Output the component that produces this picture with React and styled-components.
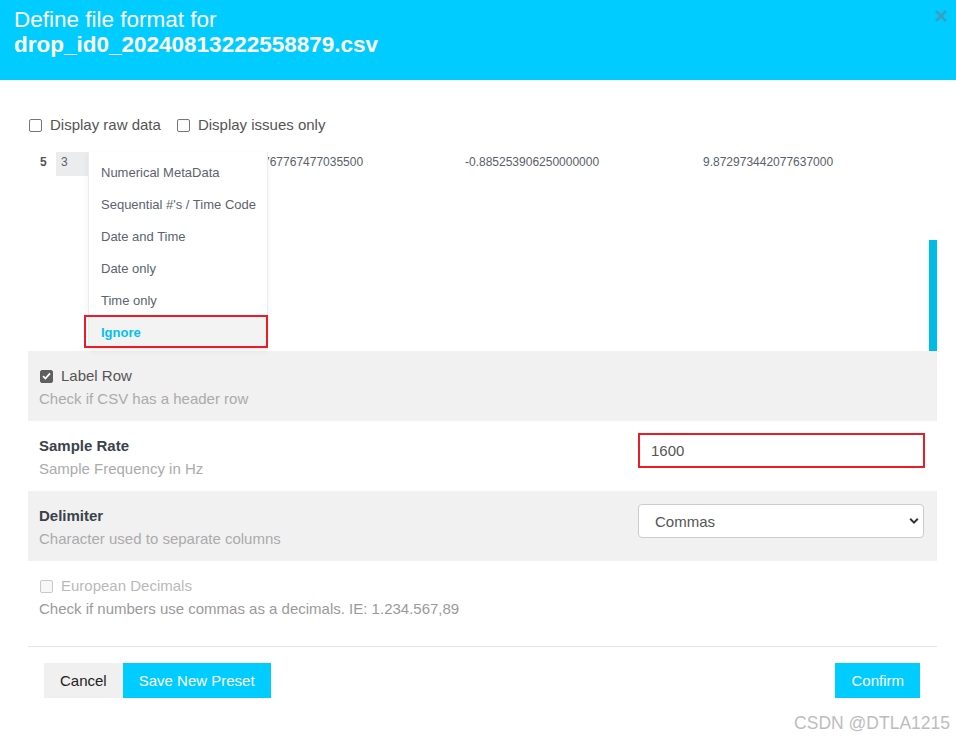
import React from "react";
import styled, { createGlobalStyle, css } from "styled-components";

const Global = createGlobalStyle`
  html, body { margin: 0; padding: 0; background: #fff; }
  body { font-family: "Liberation Sans", Arial, sans-serif; }
  * { box-sizing: border-box; }
`;

const Modal = styled.div`
  width: 956px;
  min-height: 742px;
  background: #fff;
`;

const Header = styled.header`
  height: 80px;
  background: #00ccff;
  padding: 7px 8px 0 14px;
  display: flex;
  justify-content: space-between;
  align-items: flex-start;
`;

const Title = styled.h1`
  margin: 0;
  font-size: 22.5px;
  font-weight: normal;
  line-height: 25px;
  color: #fff;
`;

const FileName = styled.span`
  display: block;
  font-weight: bold;
`;

const CloseButton = styled.button`
  border: none;
  background: transparent;
  padding: 0;
  margin-top: 2px;
  width: 14px;
  height: 14px;
  display: flex;
  cursor: pointer;
`;

const Body = styled.div`
  padding: 0 19px 0 28px;
`;

const OptionsBar = styled.div`
  display: flex;
  align-items: center;
  height: 18px;
  margin-top: 36px;
`;

const CheckLabel = styled.label`
  display: flex;
  align-items: center;
  gap: 8px;
  font-size: 15px;
  line-height: 20px;
  color: ${(p) => (p.$disabled ? "#b9b9b9" : "#555")};
  margin-right: 15px;
`;

const Box = styled.span`
  width: 13px;
  height: 13px;
  margin-left: 1px;
  border-radius: 2px;
  flex: none;
  display: flex;
  align-items: center;
  justify-content: center;
  border: 1px solid #767676;
  background: #fff;
  ${(p) =>
    p.$checked &&
    css`
      background: #5f5f5f;
      border-color: #5f5f5f;
    `}
  ${(p) =>
    p.$disabled &&
    css`
      border-color: #c8c8c8;
      background: #f7f7f7;
    `}
`;

const TableArea = styled.div`
  position: relative;
  height: 205px;
  margin-top: 12px;
  padding-top: 6px;
`;

const DataRow = styled.div`
  display: grid;
  grid-template-columns: 28px 32px 141px 236px 238px 1fr;
  height: 24px;
  font-size: 12px;
  line-height: 14px;
  color: #5a6069;
`;

const IndexCell = styled.div`
  padding: 3px 0 0 12px;
  font-weight: bold;
  color: #555;
`;

const TypeCell = styled.div`
  background: #ebeced;
  padding: 3px 0 0 5px;
`;

const ValueCell = styled.div`
  padding-top: 3px;
  white-space: nowrap;
`;

const Menu = styled.ul`
  position: absolute;
  left: 60px;
  top: 6px;
  width: 180px;
  margin: 0;
  padding: 4px 0 0;
  list-style: none;
  background: #fff;
  border: 1px solid #ededed;
  border-top: none;
  box-shadow: 0 2px 6px rgba(0, 0, 0, 0.06);
`;

const MenuItem = styled.li`
  position: relative;
  height: 32px;
  display: flex;
  align-items: center;
  padding-left: 12px;
  font-size: 13px;
  color: #5b6370;
  white-space: nowrap;
  ${(p) =>
    p.$active &&
    css`
      background: #f3f3f3;
      color: #00c2f2;
      font-weight: bold;
      &::after {
        content: "";
        position: absolute;
        left: -5px;
        right: -1px;
        top: -1px;
        bottom: 0;
        border: 2px solid #ea1c26;
      }
    `}
`;

const ScrollThumb = styled.div`
  position: absolute;
  right: 0;
  top: 94px;
  width: 8px;
  height: 111px;
  background: #00bbe6;
`;

const Section = styled.div`
  display: flex;
  justify-content: space-between;
  align-items: flex-start;
  padding: 15px 11px 11px;
  background: ${(p) => (p.$shaded ? "#f1f1f1" : "#fff")};
`;

const SectionText = styled.div`
  display: flex;
  flex-direction: column;
`;

const SectionTitle = styled.div`
  font-size: 15px;
  line-height: 20px;
  font-weight: bold;
  color: #3b424c;
`;

const SectionHint = styled.div`
  margin-top: 2px;
  font-size: 15px;
  line-height: 22px;
  color: ${(p) => (p.$dark ? "#9a9a9a" : "#ababab")};
`;

const RateInput = styled.input`
  width: 287px;
  height: 35px;
  margin: -3px 1px 0 0;
  padding: 0 11px;
  border: 2px solid #ea1c26;
  outline: none;
  font-family: inherit;
  font-size: 15px;
  color: #555;
  background: #fff;
`;

const SelectWrap = styled.div`
  position: relative;
  width: 286px;
  height: 34px;
  margin: -2px 2px 0 0;
`;

const Select = styled.select`
  appearance: none;
  width: 100%;
  height: 100%;
  padding: 0 16px;
  border: 1px solid #cccccc;
  border-radius: 4px;
  background: #fff;
  font-family: inherit;
  font-size: 15px;
  color: #555;
`;

const Chevron = styled.svg`
  position: absolute;
  right: 5px;
  top: 13px;
  pointer-events: none;
`;

const Footer = styled.div`
  margin-top: 15px;
  border-top: 1px solid #e5e5e5;
  padding: 16px 17px 0 16px;
  display: flex;
  justify-content: space-between;
`;

const ButtonGroup = styled.div`
  display: flex;
`;

const Button = styled.button`
  height: 35px;
  padding: 0 16px;
  border: none;
  font-family: inherit;
  font-size: 15px;
  cursor: pointer;
  background: ${(p) => (p.$primary ? "#00ccff" : "#f0f0f0")};
  color: ${(p) => (p.$primary ? "#fff" : "#222")};
`;

const Watermark = styled.div`
  margin-top: 14px;
  padding-right: 6px;
  text-align: right;
  font-size: 17.5px;
  line-height: 22px;
  color: #bdbdbd;
`;

const Check = () => (
  <svg width="9" height="8" viewBox="0 0 9 8">
    <path d="M1 4.2 L3.4 6.5 L8 1.3" fill="none" stroke="#fff" strokeWidth="1.8" />
  </svg>
);

const menuItems = [
  "Numerical MetaData",
  "Sequential #'s / Time Code",
  "Date and Time",
  "Date only",
  "Time only",
  "Ignore",
];

export default function App() {
  return (
    <Modal>
      <Global />
      <Header>
        <Title>
          Define file format for
          <FileName>drop_id0_20240813222558879.csv</FileName>
        </Title>
        <CloseButton aria-label="Close">
          <svg width="14" height="14" viewBox="0 0 14 14">
            <path d="M2 2 L12 12 M12 2 L2 12" stroke="#3a9fc2" strokeWidth="2.6" />
          </svg>
        </CloseButton>
      </Header>
      <Body>
        <OptionsBar>
          <CheckLabel>
            <Box />
            Display raw data
          </CheckLabel>
          <CheckLabel>
            <Box />
            Display issues only
          </CheckLabel>
        </OptionsBar>
        <TableArea>
          <DataRow>
            <IndexCell>5</IndexCell>
            <TypeCell>3</TypeCell>
            <div />
            <ValueCell>-0.216767767477035500</ValueCell>
            <ValueCell>-0.885253906250000000</ValueCell>
            <ValueCell>9.872973442077637000</ValueCell>
          </DataRow>
          <Menu>
            {menuItems.map((m) => (
              <MenuItem key={m} $active={m === "Ignore"}>
                {m}
              </MenuItem>
            ))}
          </Menu>
          <ScrollThumb />
        </TableArea>
        <Section $shaded>
          <SectionText>
            <CheckLabel>
              <Box $checked>
                <Check />
              </Box>
              Label Row
            </CheckLabel>
            <SectionHint>Check if CSV has a header row</SectionHint>
          </SectionText>
        </Section>
        <Section>
          <SectionText>
            <SectionTitle>Sample Rate</SectionTitle>
            <SectionHint>Sample Frequency in Hz</SectionHint>
          </SectionText>
          <RateInput defaultValue="1600" />
        </Section>
        <Section $shaded>
          <SectionText>
            <SectionTitle>Delimiter</SectionTitle>
            <SectionHint>Character used to separate columns</SectionHint>
          </SectionText>
          <SelectWrap>
            <Select defaultValue="Commas">
              <option>Commas</option>
              <option>Semicolons</option>
              <option>Tabs</option>
            </Select>
            <Chevron width="10" height="8" viewBox="0 0 10 8">
              <path d="M1.2 1.8 L5 5.6 L8.8 1.8" fill="none" stroke="#333" strokeWidth="2" />
            </Chevron>
          </SelectWrap>
        </Section>
        <Section>
          <SectionText>
            <CheckLabel $disabled>
              <Box $disabled />
              European Decimals
            </CheckLabel>
            <SectionHint $dark>Check if numbers use commas as a decimals. IE: 1.234.567,89</SectionHint>
          </SectionText>
        </Section>
        <Footer>
          <ButtonGroup>
            <Button>Cancel</Button>
            <Button $primary>Save New Preset</Button>
          </ButtonGroup>
          <Button $primary>Confirm</Button>
        </Footer>
      </Body>
      <Watermark>CSDN @DTLA1215</Watermark>
    </Modal>
  );
}
